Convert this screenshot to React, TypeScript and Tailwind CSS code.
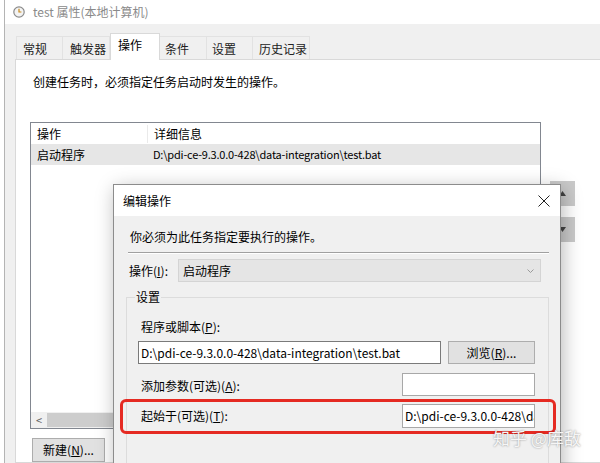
import React from 'react';

const PATH = 'D:\\pdi-ce-9.3.0.0-428\\data-integration\\test.bat';

const tabs = [
    { label: '常规', w: 'w-[47px]', pl: 'pl-[6px]' },
    { label: '触发器', w: 'w-[47px]', pl: 'pl-[7px]' },
    { label: '操作', w: 'w-[50px]', pl: 'pl-[7px]', active: true },
    { label: '条件', w: 'w-[47px]', pl: 'pl-[5px]' },
    { label: '设置', w: 'w-[46px]', pl: 'pl-[5px]' },
    { label: '历史记录', w: 'w-[57px]', pl: 'pl-[6px]' },
];

const ClockIcon = () => (
    <svg width="12" height="12" viewBox="0 0 12 12">
        <circle cx="6" cy="6" r="5.2" fill="#f3f3f3" stroke="#8a8a8a" strokeWidth="1.2" />
        <path d="M6 2.8V6h2.4" fill="none" stroke="#c98a1c" strokeWidth="1.2" />
    </svg>
);

const Tabs = () => (
    <div className="flex items-end h-[26px] pl-[1px] relative z-10">
        {tabs.map(t =>
            t.active ? (
                <div
                    key={t.label}
                    className={`${t.w} ${t.pl} h-[27px] -mb-[1px] bg-white border border-b-0 border-[#d9d9d9] leading-[22px]`}
                >
                    {t.label}
                </div>
            ) : (
                <div
                    key={t.label}
                    className={`${t.w} ${t.pl} h-[23px] bg-[#f0f0f0] border border-b-0 border-l-0 first:border-l border-[#e2e2e2] leading-[24px] text-[#222]`}
                >
                    {t.label}
                </div>
            )
        )}
    </div>
);

const ListBox = () => (
    <div className="w-[511px] h-[307px] border border-[#828790] bg-white flex flex-col">
        <div className="flex h-[21px] items-center">
            <div className="w-[116px] pl-[6px]">操作</div>
            <div className="pl-[6px] border-l border-[#eaeaea]">详细信息</div>
        </div>
        <div className="flex h-[21px] items-center bg-[#e6e6e6]">
            <div className="w-[116px] pl-[6px]">启动程序</div>
            <div className="pl-[6px] text-[11px] tracking-[-0.2px]">{PATH}</div>
        </div>
        <div className="flex-1" />
        <div className="h-[16px] bg-[#f0f0f0] flex items-center">
            <div className="w-[16px] flex items-center justify-center text-[#606060] text-[11px]">&lt;</div>
            <div className="w-[260px] h-[14px] bg-[#cdcdcd]" />
        </div>
    </div>
);

const SideButtons = () => (
    <div className="flex flex-col ml-[9px] mt-[59px]">
        <div className="w-[25px] h-[25px] bg-[#cacaca] flex items-center justify-center">
            <svg width="7" height="5" viewBox="0 0 7 5">
                <path d="M0 5L3.5 0L7 5Z" fill="#444" />
            </svg>
        </div>
        <div className="w-[25px] h-[25px] mt-[11px] bg-[#cacaca] flex items-center justify-center">
            <svg width="7" height="5" viewBox="0 0 7 5">
                <path d="M0 0L3.5 5L7 0Z" fill="#444" />
            </svg>
        </div>
    </div>
);

const Dialog = () => (
    <div className="absolute left-[113px] top-[184px] w-[448px] h-[320px] border border-[#8c8c8c] bg-[#f0f0f0] shadow-[2px_4px_18px_rgba(0,0,0,0.28)] flex flex-col">
        <div className="h-[31px] bg-white flex items-center justify-between pl-[9px] pr-[10px]">
            <span>编辑操作</span>
            <svg width="12" height="12" viewBox="0 0 12 12">
                <path d="M0.5 0.5L11.5 11.5M11.5 0.5L0.5 11.5" stroke="#222" strokeWidth="1" />
            </svg>
        </div>
        <div className="flex flex-col pt-[13px]">
            <div className="pl-[16px] leading-[16px]">你必须为此任务指定要执行的操作。</div>
            <div className="mt-[7px] ml-[14px] mr-[11px] h-[2px] border-t border-[#a0a0a0] border-b border-b-white" />
            <div className="mt-[5px] flex items-center pl-[15px] h-[23px]">
                <span className="w-[49px]">
                    操作(<u>I</u>):
                </span>
                <div className="w-[363px] h-[23px] bg-[#e5e5e5] border border-[#d4d4d4] flex items-center justify-between pl-[4px] pr-[6px]">
                    <span>启动程序</span>
                    <svg width="7" height="4" viewBox="0 0 7 4">
                        <path d="M0.5 0.5L3.5 3.5L6.5 0.5" fill="none" stroke="#9a9a9a" strokeWidth="1" />
                    </svg>
                </div>
            </div>
            <fieldset className="mt-[7px] ml-[12px] mr-[11px] border border-[#dcdcdc] h-[200px]">
                <legend className="ml-[8px] px-[1px] leading-[16px]">设置</legend>
                <div className="pl-[14px] mt-[14px] leading-[16px]">
                    程序或脚本(<u>P</u>):
                </div>
                <div className="flex mt-[6px] pl-[11px]">
                    <div className="w-[303px] h-[23px] bg-white border border-[#7a7a7a] flex items-center pl-[2px] overflow-hidden whitespace-nowrap">
                        {PATH}
                    </div>
                    <div className="ml-[7px] w-[87px] h-[23px] bg-[#e1e1e1] border border-[#adadad] flex items-center justify-center">
                        浏览(<u>R</u>)...
                    </div>
                </div>
                <div className="flex items-center mt-[9px] pl-[14px]">
                    <span className="w-[261px] pt-[3px]">
                        添加参数(可选)(<u>A</u>):
                    </span>
                    <div className="w-[133px] h-[23px] bg-white border border-[#a8a8a8]" />
                </div>
                <div className="relative flex items-center mt-[8px] pl-[14px]">
                    <span className="w-[261px]">
                        起始于(可选)(<u>T</u>):
                    </span>
                    <div className="w-[133px] h-[24px] bg-white border border-[#a8a8a8] flex items-center pl-[2px] overflow-hidden whitespace-nowrap">
                        {PATH}
                    </div>
                    <div className="absolute left-[-7px] right-[-8px] top-[-5px] bottom-[-6px] border-[3px] border-[#e52a22] rounded-[6px]" />
                </div>
            </fieldset>
        </div>
    </div>
);

export default function App() {
    return (
        <div className="relative w-[600px] h-[463px] overflow-hidden bg-white flex text-[12px] text-black font-['Noto_Sans_CJK_SC',sans-serif]">
            <div className="w-[4px] bg-white" />
            <div className="flex-1 flex flex-col border-l border-[#b4b4b4]">
                <div className="h-[29px] bg-white flex items-center pl-[8px] text-[#8a8a8a]">
                    <ClockIcon />
                    <span className="ml-[8px] leading-[16px]">test 属性(本地计算机)</span>
                </div>
                <div className="flex-1 bg-[#f0f0f0] flex flex-col pt-[9px] pl-[10px]">
                    <Tabs />
                    <div className="flex-1 bg-white border border-[#d9d9d9] border-r-0 flex flex-col pt-[14px] pl-[14px]">
                        <div className="ml-[3px] leading-[16px]">创建任务时，必须指定任务启动时发生的操作。</div>
                        <div className="flex mt-[32px]">
                            <ListBox />
                            <SideButtons />
                        </div>
                        <div className="mt-[9px] ml-[2px] w-[73px] h-[24px] bg-[#e1e1e1] border border-[#adadad] flex items-center justify-center">
                            新建(<u>N</u>)...
                        </div>
                    </div>
                </div>
            </div>
            <Dialog />
            <div className="absolute left-[493px] top-[427px] text-[17px] leading-[22px] text-[#f6f6f6] [text-shadow:0_0_2px_rgba(0,0,0,0.45)]">
                知乎 @库敌
            </div>
        </div>
    );
}
